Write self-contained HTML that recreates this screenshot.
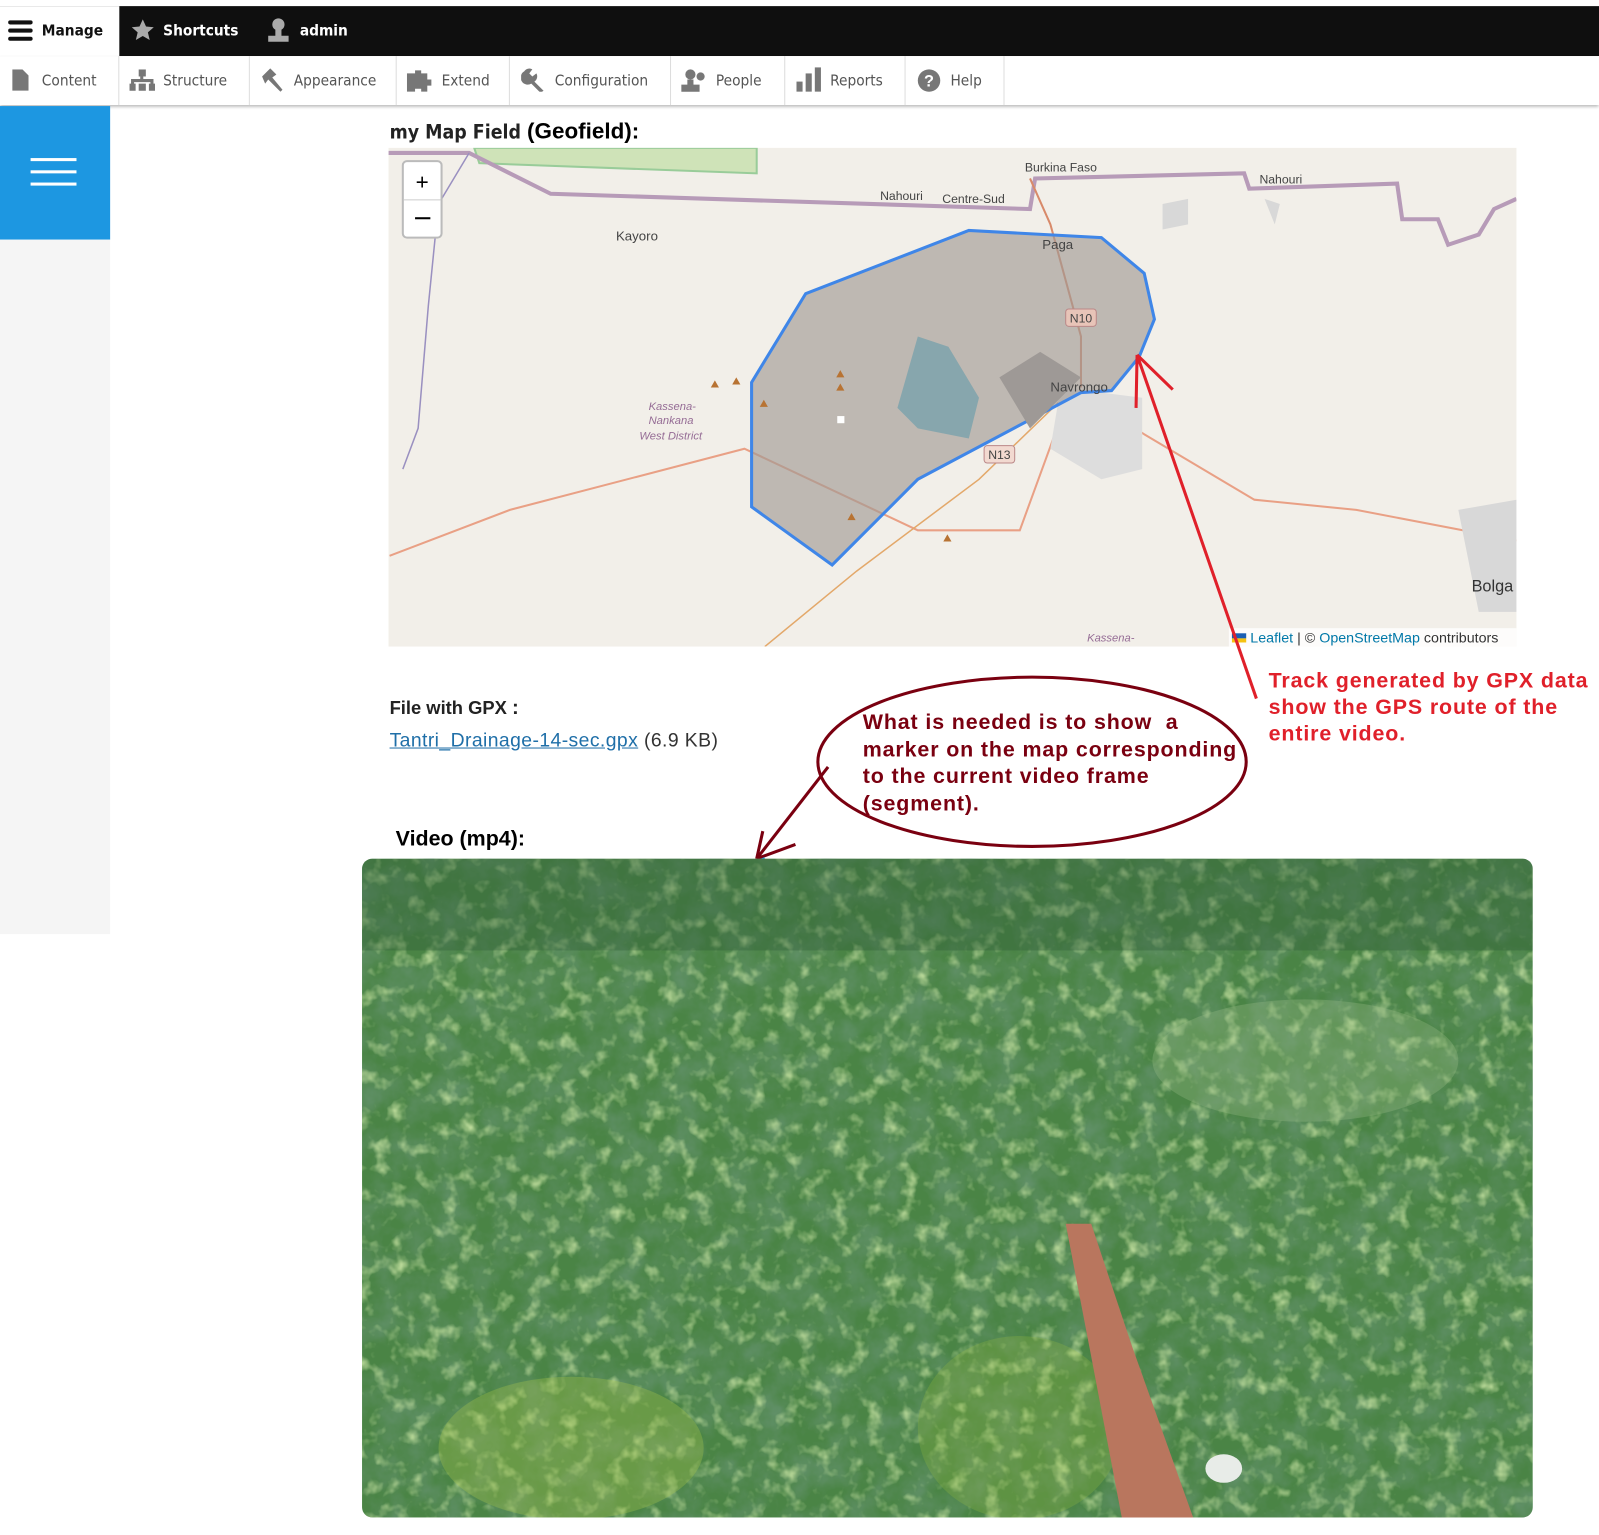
<!DOCTYPE html>
<html><head><meta charset="utf-8"><style>
html,body{margin:0;padding:0;background:#fff;overflow:hidden;width:1599px;height:1535px}
#w{position:absolute;left:0;top:0;width:1568px;height:1505px;transform:scale(1.0198);transform-origin:0 0;font-family:"Liberation Sans",sans-serif}
.a{position:absolute}
.t1{position:absolute;left:0;top:6px;width:1568px;height:49px;background:#0f0f0f}
.t1 span{position:absolute;top:15px;color:#fff;font-weight:bold;font-size:15px;font-family:"DejaVu Sans Condensed","Liberation Sans",sans-serif}
.t2{position:absolute;left:0;top:55px;width:1568px;height:48px;background:#fff;box-shadow:0 2px 3px rgba(0,0,0,.3)}
.t2 .i{position:absolute;top:0;height:48px;border-right:1px solid #ddd;color:#555;font-size:15px;line-height:48px;font-family:"DejaVu Sans Condensed","Liberation Sans",sans-serif}
.red{color:#e0202a;font-weight:bold;font-size:21px;line-height:26px;letter-spacing:.85px}
.dr{color:#7a0010;font-weight:bold;font-size:21px;line-height:26.5px;letter-spacing:.85px}
</style></head><body><div id="w">
<div class="t1">
 <div class="a" style="left:0;top:0;width:117px;height:49px;background:#fff"></div>
 <div class="a" style="left:8px;top:14px;width:24px;height:4px;background:#111;border-radius:2px;box-shadow:0 8px 0 #111,0 16px 0 #111"></div>
 <span style="left:41px;color:#111">Manage</span>
 <svg class="a" style="left:127px;top:12px" width="26" height="24" viewBox="0 0 24 24"><path d="M12 1l3.2 7 7.6.7-5.8 5 1.8 7.5L12 17.3 5.2 21.2 7 13.7 1.2 8.7l7.6-.7z" fill="#aaa"/></svg>
 <span style="left:160px">Shortcuts</span>
 <svg class="a" style="left:261px;top:11px" width="24" height="26" viewBox="0 0 24 26"><circle cx="12" cy="7" r="6" fill="#aaa"/><path d="M9 12h6v6h7v6H2v-6h7z" fill="#aaa"/></svg>
 <span style="left:294px">admin</span>
</div>
<div class="t2">
 <div class="i" style="left:0;width:116px"><svg class="a" style="left:12px;top:13px" width="16" height="21"><path d="M0 0h10l6 6v15H0z" fill="#777"/></svg><span class="a" style="left:41px">Content</span></div>
 <div class="i" style="left:117px;width:127px"><svg class="a" style="left:10px;top:13px" width="25" height="22"><rect x="9" y="0" width="7" height="7" fill="#777"/><path d="M12 7v4M3 15v-4h19v4" stroke="#777" stroke-width="3" fill="none"/><rect x="0" y="14" width="6" height="7" fill="#777"/><rect x="9" y="14" width="7" height="7" fill="#777"/><rect x="19" y="14" width="6" height="7" fill="#777"/></svg><span class="a" style="left:43px">Structure</span></div>
 <div class="i" style="left:245px;width:143px"><svg class="a" style="left:10px;top:11px" width="24" height="24"><path d="M2 9l8-8 6 6-4 3 10 12-2 2L8 12l-3 4z" fill="#777"/></svg><span class="a" style="left:43px">Appearance</span></div>
 <div class="i" style="left:389px;width:110px"><svg class="a" style="left:10px;top:13px" width="26" height="22"><path d="M0 4h8V1h6v3h6v6h4v6h-4v6h-6v-3H8v3H0z" fill="#777"/></svg><span class="a" style="left:44px">Extend</span></div>
 <div class="i" style="left:500px;width:157px"><svg class="a" style="left:11px;top:11px" width="24" height="24"><path d="M3 4a6 6 0 0 1 8-2L8 6l3 3 4-3a6 6 0 0 1-2 8l9 9-3 2-9-9A6 6 0 0 1 3 4z" fill="#777"/></svg><span class="a" style="left:44px">Configuration</span></div>
 <div class="i" style="left:658px;width:111px"><svg class="a" style="left:10px;top:12px" width="26" height="24"><circle cx="9" cy="6" r="5" fill="#777"/><path d="M6 11h6v5h6v7H0v-7h6z" fill="#777"/><circle cx="19" cy="8" r="4" fill="#777"/></svg><span class="a" style="left:44px">People</span></div>
 <div class="i" style="left:770px;width:117px"><svg class="a" style="left:11px;top:11px" width="26" height="24"><rect x="0" y="14" width="6" height="10" fill="#777"/><rect x="9" y="6" width="6" height="18" fill="#777"/><rect x="18" y="0" width="6" height="24" fill="#777"/></svg><span class="a" style="left:44px">Reports</span></div>
 <div class="i" style="left:888px;width:96px"><svg class="a" style="left:11px;top:12px" width="24" height="24"><circle cx="12" cy="12" r="11" fill="#777"/><text x="12" y="18" fill="#fff" font-size="16" font-weight="bold" text-anchor="middle" font-family="Liberation Sans">?</text></svg><span class="a" style="left:44px">Help</span></div>
</div>
<div class="a" style="left:0;top:104px;width:108px;height:131px;background:#1d97e1"></div>
<div class="a" style="left:30px;top:155px;width:45px;height:3px;background:#fff;box-shadow:0 12px 0 #fff,0 24px 0 #fff"></div>
<div class="a" style="left:0;top:235px;width:108px;height:681px;background:#f5f5f5"></div>

<div class="a" style="left:382px;top:116px;font-size:19px;font-weight:bold;color:#222;font-family:'DejaVu Sans Condensed','Liberation Sans',sans-serif">my Map Field <span style="font-family:'Liberation Sans';font-size:22px;color:#000">(Geofield):</span></div>

<svg class="a" style="left:0;top:0" width="1568" height="1505" viewBox="0 0 1568 1505">
 <defs>
  <filter id="tex" x="0" y="0" width="100%" height="100%">
   <feTurbulence type="fractalNoise" baseFrequency="0.035" numOctaves="4" seed="7"/>
   <feColorMatrix type="matrix" values="0 0 0 0 0.12  0 0 0 0 0.28  0 0 0 0 0.14  0 0 0 -1.6 1.1"/>
  </filter>
  <filter id="tex2" x="0" y="0" width="100%" height="100%">
   <feTurbulence type="fractalNoise" baseFrequency="0.06" numOctaves="3" seed="3"/>
   <feColorMatrix type="matrix" values="0 0 0 0 0.55  0 0 0 0 0.75  0 0 0 0 0.35  0 0 0 2.2 -1.15"/>
  </filter>
  <clipPath id="v"><rect x="355" y="842" width="1148" height="646" rx="10"/></clipPath>
  <clipPath id="c"><rect x="381" y="145" width="1106" height="489"/></clipPath>
 </defs>
 <rect x="381" y="145" width="1106" height="489" fill="#f2efe9"/>
 <g clip-path="url(#c)">
 <path d="M465 145 L470 160 L742 170 L742 145z" fill="#cfe3b8" stroke="#9c9" stroke-width="2"/>
 <path d="M381 150 L460 150 L540 190 L1010 205 L1015 175 L1220 170 L1225 185 L1370 180 L1375 215 L1410 215 L1420 240 L1450 230 L1465 205 L1487 195" stroke="#b79bb8" stroke-width="4" fill="none"/>
 <path d="M382 545 L500 500 L730 440 L900 520 L1000 520 L1050 383 L1230 490 L1330 500 L1487 530" stroke="#e9a085" stroke-width="2" fill="none"/>
 <path d="M1010 175 L1030 220 L1060 330 L1060 380" stroke="#d88a6a" stroke-width="2" fill="none"/>
 <path d="M750 634 L840 560 L960 470 L1050 383" stroke="#e3a86a" stroke-width="1.5" fill="none"/>
 <path d="M460 150 L430 200 L420 300 L410 420 L395 460" stroke="#9a90c0" stroke-width="1.5" fill="none"/>
 <path d="M1040 380 L1120 390 L1120 460 L1080 470 L1030 440z" fill="#ddd"/>
 <path d="M1140 200 L1165 195 L1165 220 L1140 225z M1240 195 L1255 200 L1250 220z M1430 500 L1487 490 L1487 600 L1450 600z" fill="#d8d8d8"/>
 <polygon points="790,288 950,226 1080,233 1122,268 1132,313 1117,350 1090,383 1060,385 900,470 816,554 737,497 737,375" fill="#a29a95" fill-opacity=".65" stroke="#3f86e8" stroke-width="3"/>
 <path d="M900 330 L930 340 L960 390 L950 430 L900 420 L880 400z" fill="#87a6ad"/>
 <path d="M980 370 L1020 345 L1060 370 L1010 420z" fill="#9e9996"/>
 <rect x="821" y="408" width="7" height="7" fill="#fff"/>
 <g fill="#b87333"><path d="M697 380l4 -7 4 7z M718 377l4-7 4 7z M745 399l4-7 4 7z M820 370l4-7 4 7z M820 383l4-7 4 7z M831 510l4-7 4 7z M925 531l4-7 4 7z"/></g>
 <rect x="1045" y="303" width="30" height="17" rx="3" fill="#e8c4b8" stroke="#b88"/>
 <text x="1060" y="316" font-size="12" text-anchor="middle" fill="#444" font-family="Liberation Sans">N10</text>
 <rect x="965" y="437" width="30" height="17" rx="3" fill="#f2d9d0" stroke="#b88"/>
 <text x="980" y="450" font-size="12" text-anchor="middle" fill="#444" font-family="Liberation Sans">N13</text>
 <g font-family="Liberation Sans" fill="#444" font-size="13">
  <text x="604" y="236">Kayoro</text><text x="1022" y="244">Paga</text><text x="1030" y="384">Navrongo</text>
  <text x="863" y="196" font-size="12">Nahouri</text><text x="924" y="199" font-size="12">Centre-Sud</text>
  <text x="1005" y="168" font-size="12">Burkina Faso</text><text x="1235" y="180" font-size="12">Nahouri</text>
  <text x="1443" y="580" font-size="16" fill="#333">Bolga</text>
  <g fill="#956c95" font-style="italic" font-size="11"><text x="636" y="402">Kassena-</text><text x="636" y="416">Nankana</text><text x="627" y="431">West District</text><text x="1066" y="629">Kassena-</text></g>
 </g>
 </g>
 <rect x="395" y="158" width="38" height="75" rx="4" fill="#fff" stroke="#bbb" stroke-width="2"/>
 <line x1="396" y1="196" x2="432" y2="196" stroke="#ccc"/>
 <text x="414" y="186" font-size="22" text-anchor="middle" fill="#000" font-family="Liberation Sans">+</text>
 <rect x="407" y="213" width="15" height="2" fill="#000"/>
 <rect x="1205" y="616" width="282" height="18" fill="#fff" fill-opacity=".8"/>
 <rect x="1208" y="621" width="14" height="5" fill="#1a5fb4"/><rect x="1208" y="626" width="14" height="4" fill="#f5c211"/>
 <text x="1226" y="630" font-size="14" font-family="Liberation Sans" fill="#333"><tspan fill="#0078a8">Leaflet</tspan> | © <tspan fill="#0078a8">OpenStreetMap</tspan> contributors</text>
 <path d="M1232 685 L1115 348 M1115 348 L1150 382 M1115 348 L1114 400" stroke="#e0202a" stroke-width="3" fill="none"/>
 <ellipse cx="1012" cy="747" rx="210" ry="83" fill="none" stroke="#7a0010" stroke-width="3"/>
 <path d="M812 752 L742 842 M742 842 L780 828 M742 842 L748 815" stroke="#7a0010" stroke-width="3" fill="none"/>
 <path d="M724 852 L735 848 L750 842 M735 858 L760 845" stroke="#1ea0e0" stroke-width="3" fill="none"/>
 <g clip-path="url(#v)">
  <rect x="355" y="842" width="1148" height="646" fill="#4a8445"/>
  <rect x="355" y="842" width="1148" height="646" filter="url(#tex)"/>
  <rect x="355" y="842" width="1148" height="646" filter="url(#tex2)"/>
  <rect x="355" y="842" width="1148" height="90" fill="#2f5a36" opacity=".35"/>
  <ellipse cx="1280" cy="1040" rx="150" ry="60" fill="#9fbf8a" opacity=".3"/>
  <ellipse cx="560" cy="1420" rx="130" ry="70" fill="#a3c24a" opacity=".35"/>
  <ellipse cx="1000" cy="1400" rx="100" ry="90" fill="#9cbf3e" opacity=".25"/>
  <path d="M1045 1200 L1070 1200 L1110 1320 L1170 1488 L1100 1488 L1070 1330z" fill="#b9765e"/>
  <ellipse cx="1200" cy="1440" rx="18" ry="14" fill="#e8ece8"/>
 </g>
</svg>

<div class="a red" style="left:1244px;top:655px">Track generated by GPX data<br>show the GPS route of the<br>entire video.</div>
<div class="a dr" style="left:846px;top:696px">What is needed is to show&nbsp; a<br>marker on the map corresponding<br>to the current video frame<br>(segment).</div>

<div class="a" style="left:382px;top:683px;font-size:18px;font-weight:bold;color:#222">File with GPX <span style="font-size:20px">:</span></div>
<div class="a" style="left:382px;top:716px;font-size:19px;color:#333;letter-spacing:.4px"><span style="color:#1f6fa8;text-decoration:underline">Tantri_Drainage-14-sec.gpx</span> (6.9 KB)</div>
<div class="a" style="left:388px;top:811px;font-size:21px;font-weight:bold;color:#000">Video (mp4):</div>
</div></body></html>
